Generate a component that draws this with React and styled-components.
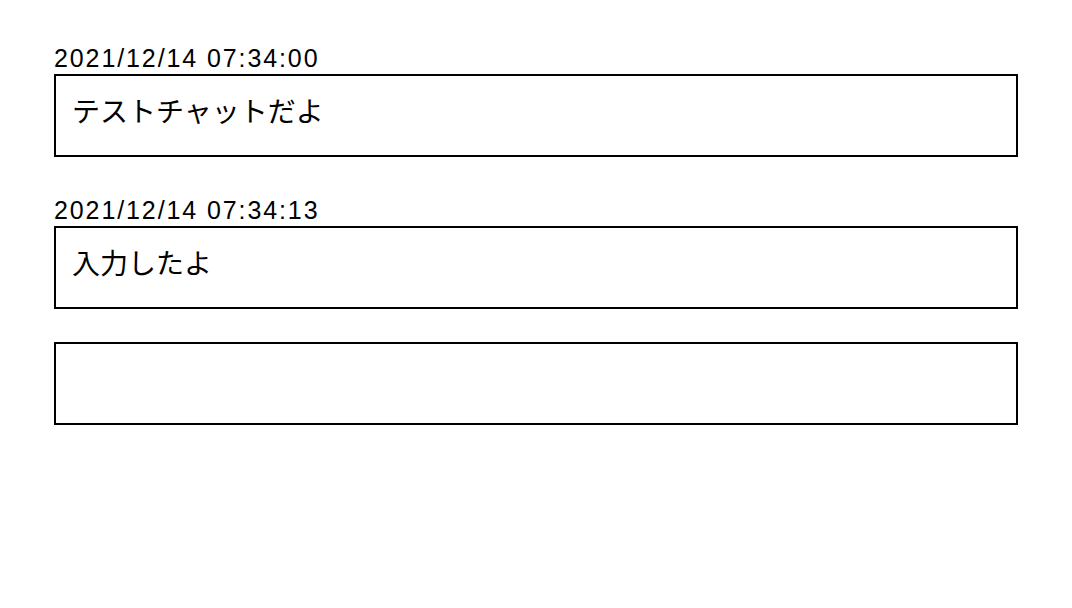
import React from 'react';
import styled, { createGlobalStyle } from 'styled-components';

const GlobalStyle = createGlobalStyle`
  html, body {
    margin: 0;
    padding: 0;
    background: #fff;
  }
  body {
    font-family: "Noto Sans CJK JP", sans-serif;
    color: #000;
  }
`;

const messages = [
  { id: 1, time: '2021/12/14 07:34:00', text: 'テストチャットだよ' },
  { id: 2, time: '2021/12/14 07:34:13', text: '入力したよ' },
];

const App = () => {
  return (
    <>
      <GlobalStyle />
      <Page>
        {messages.map((m) => (
          <Message key={m.id}>
            <Time>{m.time}</Time>
            <Bubble>{m.text}</Bubble>
          </Message>
        ))}
        <Input type="text" />
      </Page>
    </>
  );
};

const Page = styled.div`
  display: flex;
  flex-direction: column;
  gap: 33px;
  padding: 38px 54px;
`;

const Message = styled.div`
  display: flex;
  flex-direction: column;
`;

const Time = styled.div`
  height: 36px;
  font-family: "Liberation Sans", "Noto Sans CJK JP", sans-serif;
  font-size: 25px;
  line-height: 40px;
  letter-spacing: 1.9px;
`;

const Bubble = styled.div`
  box-sizing: border-box;
  height: 83px;
  padding: 15px 16px;
  border: 2px solid #000;
  font-size: 28px;
  line-height: 38px;
`;

const Input = styled.input`
  box-sizing: border-box;
  height: 83px;
  width: 100%;
  margin: 0;
  padding: 15px 16px;
  border: 2px solid #000;
  border-radius: 0;
  font-family: "Noto Sans CJK JP", sans-serif;
  font-size: 28px;
  outline: none;
`;

export default App;
